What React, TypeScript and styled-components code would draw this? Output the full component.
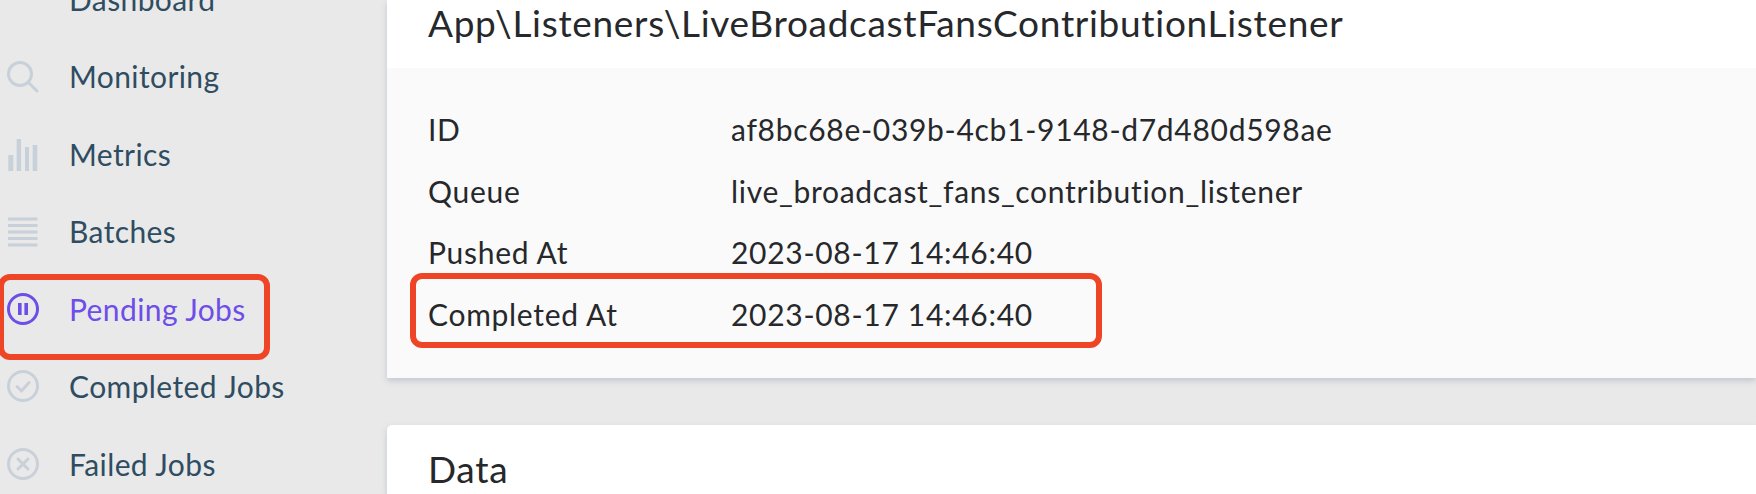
import styled, { createGlobalStyle } from 'styled-components';

const GlobalStyle = createGlobalStyle`
  html, body {
    margin: 0;
    padding: 0;
    height: 494px;
    overflow: hidden;
    background: #e9e9e9;
  }
`;

const Page = styled.div`
  display: flex;
  width: 1756px;
  height: 494px;
  overflow: hidden;
  position: relative;
  font-family: 'Lato', 'Noto Sans', sans-serif;
  background: #e9e9e9;
`;

const Sidebar = styled.nav`
  width: 387px;
  flex: none;
  margin-top: -40px;
  padding-left: 7px;
  box-sizing: border-box;
`;

const NavItem = styled.div<{ $active?: boolean }>`
  display: flex;
  align-items: center;
  height: 77.5px;
  gap: 30px;
  font-size: 30px;
  letter-spacing: 0.4px;
  color: ${(p) => (p.$active ? '#6d4ee8' : '#2f4d62')};
`;

const NavIcon = styled.svg<{ $active?: boolean }>`
  width: 32px;
  height: 32px;
  flex: none;
  color: ${(p) => (p.$active ? '#6d4ee8' : '#c8d0d9')};
`;

const Main = styled.main`
  flex: 1;
  display: flex;
  flex-direction: column;
  gap: 47px;
`;

const Card = styled.section`
  background: #fff;
  box-shadow: 0 3px 6px rgba(120, 140, 165, 0.35);
`;

const DataCard = styled(Card)`
  border-radius: 5px 0 0 0;
  height: 69px;
`;

const CardTitle = styled.h2<{ $height: number; $shift: number }>`
  margin: 0;
  height: ${(p) => p.$height}px;
  box-sizing: border-box;
  padding: ${(p) => (p.$shift > 0 ? p.$shift : 0)}px 0 ${(p) => (p.$shift < 0 ? -p.$shift : 0)}px 41px;
  display: flex;
  align-items: center;
  font-size: 37px;
  font-weight: 400;
  letter-spacing: 0.7px;
  color: #26282b;
`;

const Details = styled.div`
  background: #fafafa;
  height: 310px;
  padding: 30px 0 0 41px;
  box-sizing: border-box;
`;

const Row = styled.div`
  display: flex;
  align-items: center;
  height: 61.7px;
  font-size: 30px;
  letter-spacing: 0.7px;
  color: #26282b;
`;

const RowLabel = styled.div`
  width: 303px;
  flex: none;
`;

const Highlight = styled.div`
  position: absolute;
  box-sizing: border-box;
  border: 6px solid #ee4526;
  border-radius: 12px;
`;

const SideHighlight = styled(Highlight)`
  left: -2px;
  top: 274px;
  width: 272px;
  height: 86px;
`;

const DetailHighlight = styled(Highlight)`
  left: 410px;
  top: 273px;
  width: 692px;
  height: 75px;
`;

const Outline = styled.g`
  fill: none;
  stroke: currentColor;
  stroke-width: 3;
  stroke-linecap: round;
  stroke-linejoin: round;
`;

const icons = {
  dashboard: (
    <>
      <Outline><rect x="1.5" y="-17" width="29" height="31" rx="2.5" /></Outline>
      <path d="M16 -6 L26 5 H6 Z" fill="currentColor" />
    </>
  ),
  search: (
    <Outline>
      <circle cx="13" cy="14" r="11.5" />
      <path d="M22 23 L30 31" />
    </Outline>
  ),
  metrics: (
    <path fill="currentColor" d="M1.3 17h5v16h-5zM9.7 1h4.4v32H9.7zM18 9h4v24h-4zM25.7 7h4.6v26h-4.6z" />
  ),
  batches: (
    <path fill="currentColor" d="M1 2.5h29.5v3H1zM1 9h29.5v3H1zM1 15.5h29.5v3H1zM1 22h29.5v3H1zM1 28.5h29.5v3H1z" />
  ),
  pause: (
    <>
      <Outline><circle cx="16" cy="16" r="14.5" /></Outline>
      <path fill="currentColor" d="M11 10h3.6v12H11zM17.4 10H21v12h-3.6z" />
    </>
  ),
  completed: (
    <Outline>
      <circle cx="16" cy="16" r="14.5" />
      <path d="M10 16.5 L14.5 21 L22 12.5" />
    </Outline>
  ),
  failed: (
    <Outline>
      <circle cx="16" cy="16" r="14.5" />
      <path d="M11 11 L21 21 M21 11 L11 21" />
    </Outline>
  ),
};

const navItems: { key: keyof typeof icons; label: string; active?: boolean }[] = [
  { key: 'dashboard', label: 'Dashboard' },
  { key: 'search', label: 'Monitoring' },
  { key: 'metrics', label: 'Metrics' },
  { key: 'batches', label: 'Batches' },
  { key: 'pause', label: 'Pending Jobs', active: true },
  { key: 'completed', label: 'Completed Jobs' },
  { key: 'failed', label: 'Failed Jobs' },
];

const details = [
  ['ID', 'af8bc68e-039b-4cb1-9148-d7d480d598ae'],
  ['Queue', 'live_broadcast_fans_contribution_listener'],
  ['Pushed At', '2023-08-17 14:46:40'],
  ['Completed At', '2023-08-17 14:46:40'],
];

const App = () => {
  return (
    <Page>
      <GlobalStyle />
      <Sidebar>
        {navItems.map((item) => (
          <NavItem key={item.key} $active={item.active}>
            <NavIcon $active={item.active} viewBox="0 0 32 32" overflow="visible">
              {icons[item.key]}
            </NavIcon>
            {item.label}
          </NavItem>
        ))}
      </Sidebar>
      <Main>
        <Card>
          <CardTitle $height={68} $shift={-24}>App\Listeners\LiveBroadcastFansContributionListener</CardTitle>
          <Details>
            {details.map(([label, value]) => (
              <Row key={label}>
                <RowLabel>{label}</RowLabel>
                <div>{value}</div>
              </Row>
            ))}
          </Details>
        </Card>
        <DataCard>
          <CardTitle $height={69} $shift={18}>Data</CardTitle>
        </DataCard>
      </Main>
      <SideHighlight />
      <DetailHighlight />
    </Page>
  );
};

export default App;
